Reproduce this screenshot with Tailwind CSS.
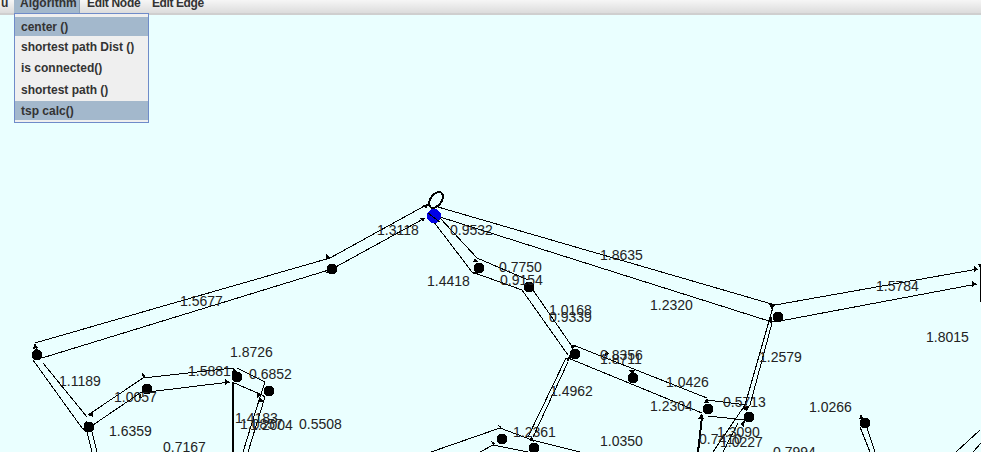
<!DOCTYPE html>
<html><head><meta charset="utf-8"><script src="https://cdn.jsdelivr.net/npm/@tailwindcss/browser@4"></script></head>
<body class="m-0 overflow-hidden">
<div class="relative w-[981px] h-[452px] overflow-hidden bg-[#eaffff] font-['Liberation_Sans',sans-serif]">
  <nav class="h-[15px] flex items-start bg-gradient-to-b from-[#f6f6f6] to-[#dcdcdc] border-b-2 border-[#cfcfcf] text-xs font-bold text-[#333]">
    <span class="w-[14px] h-[13px] leading-[7px] pl-[1px]">u</span>
    <span class="w-[66px] pl-[6px] bg-[#a3b8cc] border-r border-[#8da0b5] h-[13px] leading-[7px]">Algorithm</span>
    <span class="pl-[7px] w-[65px] leading-[7px] h-[13px] tracking-[-0.3px]">Edit Node</span>
    <span class="pl-[7px] leading-[7px] h-[13px] tracking-[-0.4px]">Edit Edge</span>
  </nav>
  <svg class="absolute left-0 top-0" width="981" height="452" viewBox="0 0 981 452" fill="none" stroke="#000" stroke-width="1" shape-rendering="crispEdges">
    <g>
      <path d="M35 343L330 258L428 204M42 358L332 269L425 218"/>
      <path d="M33 360L82 428M43 363L87 417M87 432L92 452M92 432L97 452"/>
      <path d="M88 415L143 378L233 368M93 425L140 393L230 382"/>
      <path d="M237 368L265 382L260 397L243 452M232 382L262 395L265 397L248 452"/>
      <path d="M233 382V452" stroke-width="2"/>
      <path d="M440 218L477 258L528 280M533 290L571 345M427 213L472 272L522 290L568 355"/>
      <path d="M438 207L775 305L978 269M440 217L772 322L780 321L977 284"/>
      <path d="M980 268V302"/>
      <path d="M573 345L707 398M707 400L747 405M568 358L702 413M708 416L745 420"/>
      <path d="M566 358L528 437M568 362L533 437"/>
      <path d="M431 452L500 428L532 440L580 452M480 452L493 445L528 452"/>
      <path d="M773 307L745 405L713 452M772 323L750 405M738 423L723 452"/>
      <path d="M702 417L698 452" stroke-width="2"/>
      <path d="M860 427L870 452M867 428L875 452"/>
      <path d="M956 452L980 430M973 452L981 443"/>
    </g>
    <ellipse cx="436" cy="200" rx="5.5" ry="9" transform="rotate(38 436 200)" stroke-width="2"/>
    <g fill="#000">
      <circle cx="332" cy="269" r="5"/><circle cx="479" cy="268" r="5"/><circle cx="529" cy="287" r="5"/>
      <circle cx="37" cy="355" r="5"/><circle cx="89" cy="427" r="5"/><circle cx="147" cy="389" r="5"/>
      <circle cx="237" cy="377" r="5"/><circle cx="269" cy="391" r="5"/>
      <circle cx="575" cy="354" r="5"/><circle cx="633" cy="378" r="5"/><circle cx="708" cy="409" r="5"/>
      <circle cx="749" cy="417" r="5"/><circle cx="778" cy="317" r="5"/><circle cx="865" cy="423" r="5"/>
      <circle cx="502" cy="439" r="5"/><circle cx="534" cy="448" r="5"/>
      <path stroke="none" d="M429 204l-6 1 3 4zM425 218l-5 0 3 4zM475 258l-2 4 5 0zM472 272l5-1-3 4zM326 273l6-1-3-4zM330 258l-4-4 0 6zM35 343l-2 6 5-1zM40 352l-6 1 2-6zM88 415l5-3 0 5zM87 421l-4 3 5 2zM82 428l6 1-2 4zM143 378l-1-5 4 3zM140 393l-1 5 3 0zM233 368l-1 6 6-1zM230 382l-5-3 0 6zM262 395l-5-3 0 6zM260 397l4 5-6 0zM571 345l1 5 3-4zM568 358l6-1-4-3zM566 358l2 4 2-5zM707 398l-3 5 5 0zM702 413l-4 6 6 0zM745 420l-5 4 4 3zM742 408l8 -3-3 6zM775 305l-6-1 3 6zM772 323l-4-1 4-6zM605 356l1-6 3 4zM633 375l-4-5 6 0zM978 269l-4-3 0 6zM977 284l-5-3 0 6zM978 264l5 0-2 6zM861 414l-2 5 5 1zM500 428l-2-3 4 2zM493 445l-2-4 4 2zM528 440l4-4 2 6z"/>
    </g>
    <circle cx="434" cy="216" r="7" fill="#0000e6" stroke="none"/>
    <path d="M428 213L440 222" />
    <g fill="#222" stroke="none" font-family="Liberation Sans, sans-serif" font-size="14" shape-rendering="auto">
      <text x="377" y="235">1.3118</text><text x="450" y="235">0.9532</text><text x="600" y="260">1.8635</text>
      <text x="499" y="272">0.7750</text><text x="427" y="286">1.4418</text><text x="500" y="285">0.9154</text>
      <text x="549" y="315">1.0168</text><text x="549" y="322">0.9339</text><text x="650" y="310">1.2320</text>
      <text x="180" y="306">1.5677</text><text x="876" y="291">1.5784</text><text x="926" y="342">1.8015</text>
      <text x="759" y="362">1.2579</text><text x="59" y="386">1.1189</text><text x="230" y="357">1.8726</text>
      <text x="188" y="376">1.5881</text><text x="249" y="379">0.6852</text><text x="114" y="402">1.0057</text>
      <text x="109" y="436">1.6359</text><text x="163" y="452">0.7167</text><text x="235" y="423">1.4183</text>
      <text x="240" y="429">1.0857</text><text x="250" y="430">1.2004</text><text x="299" y="429">0.5508</text>
      <text x="600" y="360">0.8356</text><text x="600" y="364">1.8711</text><text x="666" y="387">1.0426</text>
      <text x="550" y="396">1.4962</text><text x="650" y="411">1.2304</text><text x="723" y="407">0.5713</text>
      <text x="809" y="412">1.0266</text><text x="717" y="437">1.3090</text><text x="699" y="444">0.7410</text>
      <text x="720" y="447">1.0227</text><text x="773" y="457">0.7994</text><text x="513" y="437">1.2361</text>
      <text x="600" y="446">1.0350</text>
    </g>
  </svg>
  <div class="absolute left-[14px] top-[13px] w-[135px] h-[110px] border border-[#6f8bc9] bg-[#efefef] text-xs font-bold text-[#333] pt-[3px]">
    <div class="h-[19px] leading-[20px] pl-[6px] bg-[#a3b8cc]">center ()</div>
    <div class="h-[21px] leading-[23px] pl-[6px]">shortest path Dist ()</div>
    <div class="h-[22px] leading-[23px] pl-[6px]">is connected()</div>
    <div class="h-[22px] leading-[23px] pl-[6px]">shortest path ()</div>
    <div class="h-[19px] leading-[20px] pl-[6px] bg-[#a3b8cc]">tsp calc()</div>
  </div>
</div>
</body></html>
